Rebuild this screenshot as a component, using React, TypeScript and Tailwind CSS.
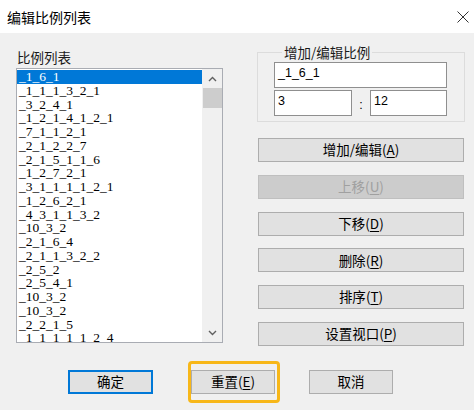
import React from "react";

const items = [
  "_1_6_1",
  "_1_1_1_3_2_1",
  "_3_2_4_1",
  "_1_2_1_4_1_2_1",
  "_7_1_1_2_1",
  "_2_1_2_2_7",
  "_2_1_5_1_1_6",
  "_1_2_7_2_1",
  "_3_1_1_1_1_2_1",
  "_1_2_6_2_1",
  "_4_3_1_1_3_2",
  "_10_3_2",
  "_2_1_6_4",
  "_2_1_1_3_2_2",
  "_2_5_2",
  "_2_5_4_1",
  "_10_3_2",
  "_10_3_2",
  "_2_2_1_5",
  "_1_1_1_1_1_2_4",
];

function Chevron({ down }: { down?: boolean }) {
  return (
    <svg width="9" height="6" viewBox="0 0 9 6">
      <path
        d={down ? "M1 1 L4.5 4.5 L8 1" : "M1 5 L4.5 1.5 L8 5"}
        fill="none"
        stroke="#606060"
        strokeWidth="1.4"
      />
    </svg>
  );
}

function Btn({
  label,
  hot,
  disabled,
}: {
  label: string;
  hot: string;
  disabled?: boolean;
}) {
  return (
    <div
      className={
        disabled
          ? "h-[24px] w-full border border-[#bfbfbf] bg-[#cccccc] text-[#a0a0a0] flex items-center justify-center text-[13.5px] leading-none"
          : "h-[24px] w-full border border-[#adadad] bg-[#e1e1e1] text-black flex items-center justify-center text-[13.5px] leading-none"
      }
    >
      <span>{label}(</span>
      <span className="underline underline-offset-2">{hot}</span>
      <span>)</span>
    </div>
  );
}

export default function App() {
  return (
    <div className="w-[474px] h-[410px] bg-[#f0f0f0] flex flex-col font-['Noto_Sans_CJK_SC',sans-serif] text-black overflow-hidden">
      {/* title bar */}
      <div className="h-[33px] bg-white flex items-center justify-between pl-[7px] pr-[5px] shrink-0">
        <span className="text-[14px] leading-none">编辑比例列表</span>
        <svg width="12" height="12" viewBox="0 0 12 12" className="mr-[0px]">
          <path d="M0.5 0.5 L11.5 11.5 M11.5 0.5 L0.5 11.5" stroke="#333" strokeWidth="1" />
        </svg>
      </div>

      {/* main */}
      <div className="flex pl-[16px] pt-[12px] gap-[34px]">
        {/* left column */}
        <div className="w-[207px] flex flex-col">
          <div className="h-[22px] mt-[1px] leading-[22px] text-[13.5px] pl-[1px] text-[#1a1a1a]">比例列表</div>
          <div className="h-[275px] border border-[#a9acb3] bg-white flex">
            <div className="flex-1 pt-[1px] overflow-hidden font-['Liberation_Serif',serif] text-[13.5px]">
              {items.map((t, i) => (
                <div
                  key={i}
                  className={
                    i === 0
                      ? "h-[13.75px] leading-[13.75px] pl-[2px] bg-[#0078d7] text-white whitespace-nowrap"
                      : "h-[13.75px] leading-[13.75px] pl-[2px] text-black whitespace-nowrap"
                  }
                >
                  {t}
                </div>
              ))}
            </div>
            <div className="w-[20px] bg-[#f0f0f0] flex flex-col">
              <div className="h-[19px] flex items-center justify-center">
                <Chevron />
              </div>
              <div className="h-[20px] pl-[1px]">
                <div className="h-full bg-[#cdcdcd]" />
              </div>
              <div className="flex-1" />
              <div className="h-[19px] flex items-center justify-center">
                <Chevron down />
              </div>
            </div>
          </div>
        </div>

        {/* right column */}
        <div className="w-[208px] flex flex-col">
          <fieldset className="border border-[#dcdcdc] pl-[16px] pr-[17px] pb-[5px]">
            <legend className="ml-[8px] px-[2px] text-[13.5px] leading-[14px] text-[#1a1a1a]">增加/编辑比例</legend>
            <div className="mt-[3px] h-[26px] border border-[#8f8f8f] bg-white pl-[3px] pt-[2px] font-['Liberation_Sans',sans-serif] text-[12.5px] leading-[16px]">
              _1_6_1
            </div>
            <div className="mt-[2px] flex items-stretch h-[26px]">
              <div className="w-[78px] border border-[#8f8f8f] bg-white pl-[3px] pt-[2px] font-['Liberation_Sans',sans-serif] text-[12.5px] leading-[16px]">
                3
              </div>
              <div className="w-[18px] flex items-center justify-center pt-[4px] font-['Liberation_Sans',sans-serif] text-[12.5px]">
                :
              </div>
              <div className="flex-1 border border-[#8f8f8f] bg-white pl-[3px] pt-[2px] font-['Liberation_Sans',sans-serif] text-[12.5px] leading-[16px]">
                12
              </div>
            </div>
          </fieldset>
          <div className="mt-[16px] pl-[1px] pr-[1px] flex flex-col gap-[12.75px]">
            <Btn label="增加/编辑" hot="A" />
            <Btn label="上移" hot="U" disabled />
            <Btn label="下移" hot="D" />
            <Btn label="删除" hot="R" />
            <Btn label="排序" hot="T" />
            <Btn label="设置视口" hot="P" />
          </div>
        </div>
      </div>

      {/* bottom buttons */}
      <div className="flex mt-[24px] pl-[68px]">
        <div className="w-[85px] h-[24px] border-2 border-[#0078d7] bg-[#e1e1e1] flex items-center justify-center text-[13.5px] leading-none">
          确定
        </div>
        <div className="relative ml-[38px] w-[84px] h-[24px]">
          <div className="w-full h-full border border-[#adadad] bg-[#e1e1e1] flex items-center justify-center text-[13.5px] leading-none">
            <span>重置(</span>
            <span className="underline underline-offset-2">E</span>
            <span>)</span>
          </div>
          <div className="absolute left-[-3px] right-[-5px] top-[-9px] bottom-[-9px] border-[3px] border-[#f7b719] rounded-[4px] pointer-events-none" />
        </div>
        <div className="ml-[34px] w-[84px] h-[24px] border border-[#adadad] bg-[#e1e1e1] flex items-center justify-center text-[13.5px] leading-none">
          取消
        </div>
      </div>
    </div>
  );
}
